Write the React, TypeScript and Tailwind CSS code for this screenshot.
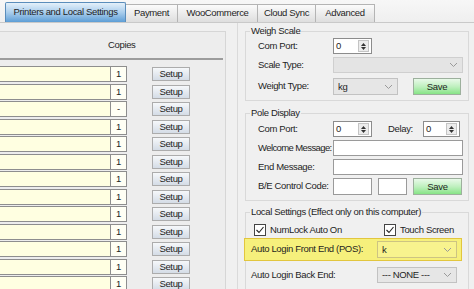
import React from "react";

const copies = ["1", "1", "-", "1", "1", "1", "1", "1", "1", "1", "1", "1", "1"];

function Chevron() {
  return (
    <svg width="9" height="6" viewBox="0 0 9 6" className="shrink-0">
      <path d="M1 1 L4.5 4.5 L8 1" fill="none" stroke="#9a9a9a" strokeWidth="1" />
    </svg>
  );
}

function Spinner({ value, w }: { value: string; w: string }) {
  return (
    <div className={`${w} h-[16px] border border-[#8c8c8c] bg-white flex items-center`}>
      <span className="flex-1 pl-[2px] leading-none">{value}</span>
      <div className="w-[11px] h-[12px] mr-[2px] border border-[#c4c4c4] bg-[#ececec] flex flex-col items-center justify-center gap-[1px]">
        <svg width="5" height="3" viewBox="0 0 5 3">
          <path d="M0 3 L2.5 0 L5 3 Z" fill="#333" />
        </svg>
        <svg width="5" height="3" viewBox="0 0 5 3">
          <path d="M0 0 L2.5 3 L5 0 Z" fill="#333" />
        </svg>
      </div>
    </div>
  );
}

function Select({ value, w, h = "h-[16px]", tone = "bg-[#e6e6e6] border-[#c2c2c2]" }: { value?: string; w: string; h?: string; tone?: string }) {
  return (
    <div className={`${w} ${h} border ${tone} flex items-center pl-[4px] pr-[4px]`}>
      <span className="flex-1 leading-none">{value}</span>
      <Chevron />
    </div>
  );
}

function TextBox({ w, h = "h-[16px]" }: { w: string; h?: string }) {
  return <div className={`${w} ${h} border border-[#9a9a9a] bg-white`} />;
}

function SaveButton({ w }: { w: string }) {
  return (
    <button className={`${w} h-[17px] border border-[#9db09d] bg-gradient-to-b from-[#e9f9e9] via-[#bff0bf] to-[#86e486] leading-none`}>
      Save
    </button>
  );
}

function CheckBox({ label }: { label: string }) {
  return (
    <div className="flex items-center gap-[4px]">
      <svg width="12" height="12" viewBox="0 0 12 12">
        <rect x="0.5" y="0.5" width="11" height="11" fill="#fff" stroke="#444" />
        <path d="M2.5 6 L5 8.5 L9.5 3" fill="none" stroke="#222" strokeWidth="1.1" />
      </svg>
      <span className="leading-none">{label}</span>
    </div>
  );
}

function Tab({ label, w, active }: { label: string; w: string; active?: boolean }) {
  return (
    <div
      className={
        active
          ? `${w} h-[20px] flex items-center justify-center whitespace-nowrap border border-b-0 border-[#5a8dbb] bg-gradient-to-b from-[#e4f0fa] via-[#a9cdec] to-[#5d9ed6] rounded-t-[2px]`
          : `${w} h-[18px] flex items-center justify-center whitespace-nowrap border border-b-0 border-l-0 border-[#b4b4b4] bg-gradient-to-b from-[#fbfbfb] to-[#dedede]`
      }
    >
      {label}
    </div>
  );
}

export default function App() {
  return (
    <div className="w-[474px] h-[289px] overflow-hidden bg-[#f0f0f0] text-[9.5px] tracking-[-0.35px] text-[#1e1e1e] font-['Liberation_Sans',Arial,sans-serif] flex flex-col">
      <div className="h-[23px] shrink-0 flex items-end pl-[5px] border-b border-[#c9c9c9] bg-gradient-to-b from-[#f7f7f7] to-[#efefef]">
        <Tab label="Printers and Local Settings" w="w-[121px]" active />
        <Tab label="Payment" w="w-[52px]" />
        <Tab label="WooCommerce" w="w-[80px]" />
        <Tab label="Cloud Sync" w="w-[58px]" />
        <Tab label="Advanced" w="w-[59px]" />
      </div>

      <div className="flex flex-1 min-h-0">
        <div className="w-[226px] shrink-0 mt-[8px] border-t border-r border-[#d6d6d6] bg-[#ededed]">
          <div className="h-[26px] flex items-center pl-[108px]">Copies</div>
          <div className="w-[223px] border-b-2 border-[#9c9c9c]" />
          <div className="pt-[6px] flex flex-col gap-[1.5px]">
            {copies.map((c, i) => (
              <div key={i} className="flex items-center h-[16px] shrink-0">
                <div className="w-[111px] h-full border border-l-0 border-[#8e8e8e] bg-[#ffffe1]" />
                <div className="w-[16px] h-full border border-l-0 border-[#8e8e8e] bg-[#fffff4] flex items-center justify-center leading-none">
                  {c}
                </div>
                <button className="ml-[25px] w-[38px] h-[14px] border border-[#acacac] bg-gradient-to-b from-[#f6f8fa] to-[#d4dce6] leading-none">
                  Setup
                </button>
              </div>
            ))}
          </div>
        </div>

        <div className="w-[11px] shrink-0" />

        <div className="flex-1 border-l border-[#dadada] pl-[7px] pt-[2px]">
          <fieldset className="w-[224px] border border-[#d9d9d9] pl-[4px] pb-[5px]">
            <legend className="px-[1px] leading-[12px]">Weigh Scale</legend>
            <div className="pt-[1px] pl-[8px] flex flex-col">
              <div className="flex items-center h-[16px]">
                <span className="w-[75px]">Com Port:</span>
                <Spinner value="0" w="w-[39px]" />
              </div>
              <div className="flex items-center h-[16px] mt-[3px]">
                <span className="w-[75px]">Scale Type:</span>
                <Select w="w-[130px]" tone="bg-[#e4e4e4] border-[#cfcfcf]" />
              </div>
              <div className="flex items-center h-[17px] mt-[5px]">
                <span className="w-[75px]">Weight Type:</span>
                <Select value="kg" w="w-[65px]" h="h-[17px]" />
                <div className="ml-[15px]">
                  <SaveButton w="w-[48px]" />
                </div>
              </div>
            </div>
          </fieldset>

          <fieldset className="w-[224px] mt-[6px] border border-[#d9d9d9] pl-[4px] pb-[5px]">
            <legend className="px-[1px] leading-[12px]">Pole Display</legend>
            <div className="pt-[2px] pl-[8px] flex flex-col">
              <div className="flex items-center h-[16px]">
                <span className="w-[75px]">Com Port:</span>
                <Spinner value="0" w="w-[39px]" />
                <span className="ml-[16px] w-[35px]">Delay:</span>
                <Spinner value="0" w="w-[37px]" />
              </div>
              <div className="flex items-center h-[16px] mt-[3px]">
                <span className="w-[75px] whitespace-nowrap tracking-[-0.6px]">Welcome Message:</span>
                <TextBox w="w-[130px]" />
              </div>
              <div className="flex items-center h-[16px] mt-[3px]">
                <span className="w-[75px]">End Message:</span>
                <TextBox w="w-[130px]" />
              </div>
              <div className="flex items-center h-[17px] mt-[3px]">
                <span className="w-[75px] whitespace-nowrap">B/E Control Code:</span>
                <TextBox w="w-[39px]" h="h-[17px]" />
                <div className="ml-[6px]">
                  <TextBox w="w-[29px]" h="h-[17px]" />
                </div>
                <div className="ml-[6px]">
                  <SaveButton w="w-[49px]" />
                </div>
              </div>
            </div>
          </fieldset>

          <fieldset className="w-[224px] mt-[5px] border border-[#d9d9d9] pl-[4px] pb-[20px]">
            <legend className="px-[1px] leading-[12px]">Local Settings (Effect only on this computer)</legend>
            <div className="flex flex-col">
              <div className="flex items-center h-[12px] mt-[6px] pl-[4px]">
                <div className="w-[130px]">
                  <CheckBox label="NumLock Auto On" />
                </div>
                <CheckBox label="Touch Screen" />
              </div>
              <div className="flex items-center ml-[-6px] mt-[2px] w-[218px] h-[23px] bg-[#f6f07c] border border-[#e2c63e] pl-[6px]">
                <span className="w-[126px] whitespace-nowrap">Auto Login Front End (POS):</span>
                <Select value="k" w="w-[80px]" h="h-[17px]" tone="bg-[#f8f38e] border-[#cdc482]" />
              </div>
              <div className="flex items-center h-[16px] mt-[6px] pl-[1px]">
                <span className="w-[126px]">Auto Login Back End:</span>
                <Select value="--- NONE ---" w="w-[80px]" />
              </div>
            </div>
          </fieldset>
        </div>
      </div>
    </div>
  );
}
